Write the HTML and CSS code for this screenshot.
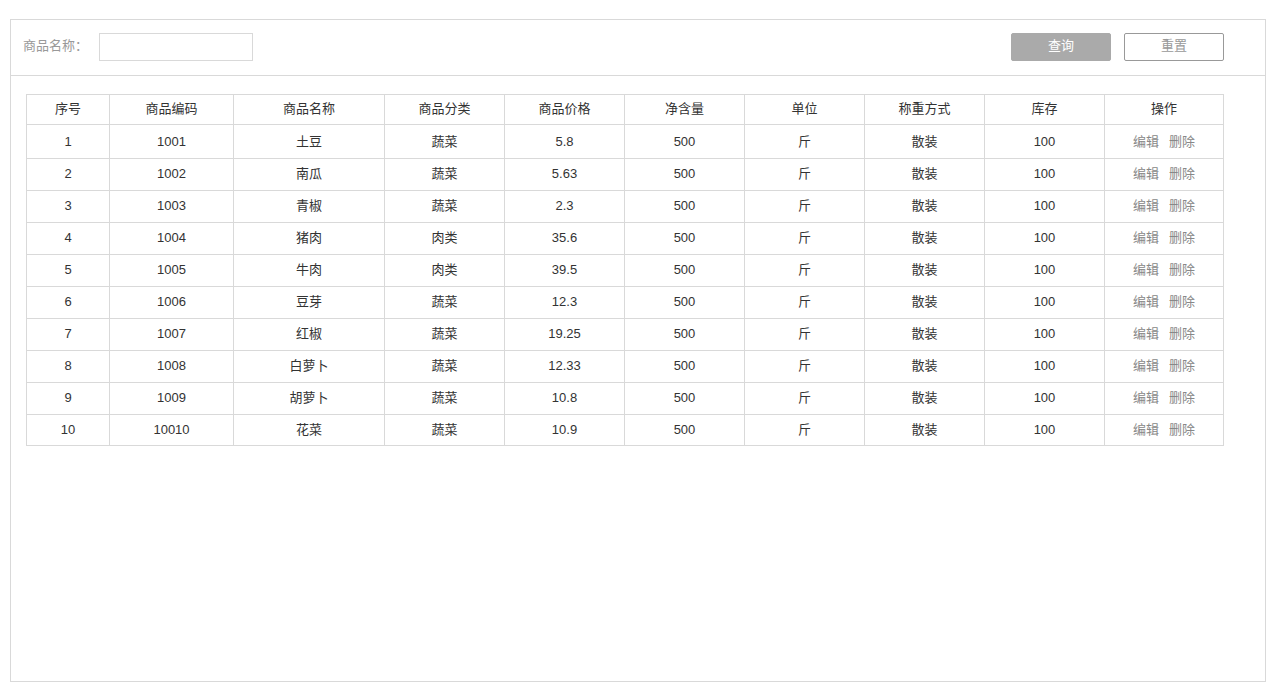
FILE: index.html
```html
<!DOCTYPE html>
<html lang="zh-CN">
<head>
<meta charset="utf-8">
<title>商品管理</title>
<link rel="stylesheet" href="styles.css">
</head>
<body>
<div class="panel">
  <div class="search-bar">
    <label class="search-label">商品名称：</label>
    <input class="search-input" type="text">
    <div class="spacer"></div>
    <button class="btn btn-primary">查询</button>
    <button class="btn btn-default">重置</button>
  </div>
  <div class="table-wrap">
    <table class="goods-table">
      <colgroup>
        <col style="width:83px"><col style="width:124px"><col style="width:151px">
        <col style="width:120px"><col style="width:120px"><col style="width:120px">
        <col style="width:120px"><col style="width:120px"><col style="width:120px">
        <col style="width:119px">
      </colgroup>
      <thead>
        <tr><th>序号</th><th>商品编码</th><th>商品名称</th><th>商品分类</th><th>商品价格</th><th>净含量</th><th>单位</th><th>称重方式</th><th>库存</th><th>操作</th></tr>
      </thead>
      <tbody>
        <tr class="first"><td>1</td><td>1001</td><td>土豆</td><td>蔬菜</td><td>5.8</td><td>500</td><td>斤</td><td>散装</td><td>100</td><td class="ops"><a>编辑</a><a>删除</a></td></tr>
        <tr><td>2</td><td>1002</td><td>南瓜</td><td>蔬菜</td><td>5.63</td><td>500</td><td>斤</td><td>散装</td><td>100</td><td class="ops"><a>编辑</a><a>删除</a></td></tr>
        <tr><td>3</td><td>1003</td><td>青椒</td><td>蔬菜</td><td>2.3</td><td>500</td><td>斤</td><td>散装</td><td>100</td><td class="ops"><a>编辑</a><a>删除</a></td></tr>
        <tr><td>4</td><td>1004</td><td>猪肉</td><td>肉类</td><td>35.6</td><td>500</td><td>斤</td><td>散装</td><td>100</td><td class="ops"><a>编辑</a><a>删除</a></td></tr>
        <tr><td>5</td><td>1005</td><td>牛肉</td><td>肉类</td><td>39.5</td><td>500</td><td>斤</td><td>散装</td><td>100</td><td class="ops"><a>编辑</a><a>删除</a></td></tr>
        <tr><td>6</td><td>1006</td><td>豆芽</td><td>蔬菜</td><td>12.3</td><td>500</td><td>斤</td><td>散装</td><td>100</td><td class="ops"><a>编辑</a><a>删除</a></td></tr>
        <tr><td>7</td><td>1007</td><td>红椒</td><td>蔬菜</td><td>19.25</td><td>500</td><td>斤</td><td>散装</td><td>100</td><td class="ops"><a>编辑</a><a>删除</a></td></tr>
        <tr><td>8</td><td>1008</td><td>白萝卜</td><td>蔬菜</td><td>12.33</td><td>500</td><td>斤</td><td>散装</td><td>100</td><td class="ops"><a>编辑</a><a>删除</a></td></tr>
        <tr><td>9</td><td>1009</td><td>胡萝卜</td><td>蔬菜</td><td>10.8</td><td>500</td><td>斤</td><td>散装</td><td>100</td><td class="ops"><a>编辑</a><a>删除</a></td></tr>
        <tr class="last"><td>10</td><td>10010</td><td>花菜</td><td>蔬菜</td><td>10.9</td><td>500</td><td>斤</td><td>散装</td><td>100</td><td class="ops"><a>编辑</a><a>删除</a></td></tr>
      </tbody>
    </table>
  </div>
</div>
</body>
</html>
```
FILE: styles.css
```css
html, body {
  margin: 0;
  padding: 0;
  background: #fff;
}
body {
  padding: 19px 13px 0 10px;
  font-family: "Liberation Sans", Arial, "Noto Sans CJK SC", sans-serif;
  font-size: 13px;
  line-height: 16px;
  color: #333;
}
.panel {
  border: 1px solid #d9d9d9;
  height: 661px;
}
.search-bar {
  display: flex;
  align-items: flex-start;
  height: 56px;
  box-sizing: border-box;
  border-bottom: 1px solid #d9d9d9;
  padding: 13px 41px 0 12px;
}
.search-label {
  color: #999;
  width: 76px;
  line-height: 26px;
}
.search-input {
  width: 154px;
  height: 28px;
  box-sizing: border-box;
  border: 1px solid #d9d9d9;
  border-radius: 0;
  padding: 0 6px;
  margin: 0;
  outline: none;
}
.spacer { flex: 1; }
.btn {
  width: 100px;
  height: 28px;
  box-sizing: border-box;
  border-radius: 2px;
  font-family: "Liberation Sans", Arial, "Noto Sans CJK SC", sans-serif;
  font-size: 13px;
  line-height: 22px;
  padding: 0 0 2px;
  margin: 0;
  cursor: pointer;
}
.btn-primary {
  background: #aaa;
  border: 1px solid #aaa;
  color: #fff;
}
.btn-default {
  background: #fff;
  border: 1px solid #999;
  color: #999;
  margin-left: 13px;
}
.table-wrap {
  padding: 18px 0 0 15px;
}
.goods-table {
  border-collapse: collapse;
  table-layout: fixed;
  width: 1198px;
}
.goods-table th,
.goods-table td {
  border: 1px solid #d9d9d9;
  text-align: center;
  padding: 0;
  font-weight: normal;
  color: #333;
  white-space: nowrap;
  line-height: 16px;
}
.goods-table th {
  height: 27px;
  padding-bottom: 2px;
}
.goods-table td {
  height: 30px;
  padding-bottom: 1px;
}
.goods-table tr.first td {
  height: 33px;
  padding-bottom: 0;
}
.goods-table tr.last td {
  height: 29px;
}
.ops a {
  color: #888;
  margin: 0 5px;
  cursor: pointer;
}
```
